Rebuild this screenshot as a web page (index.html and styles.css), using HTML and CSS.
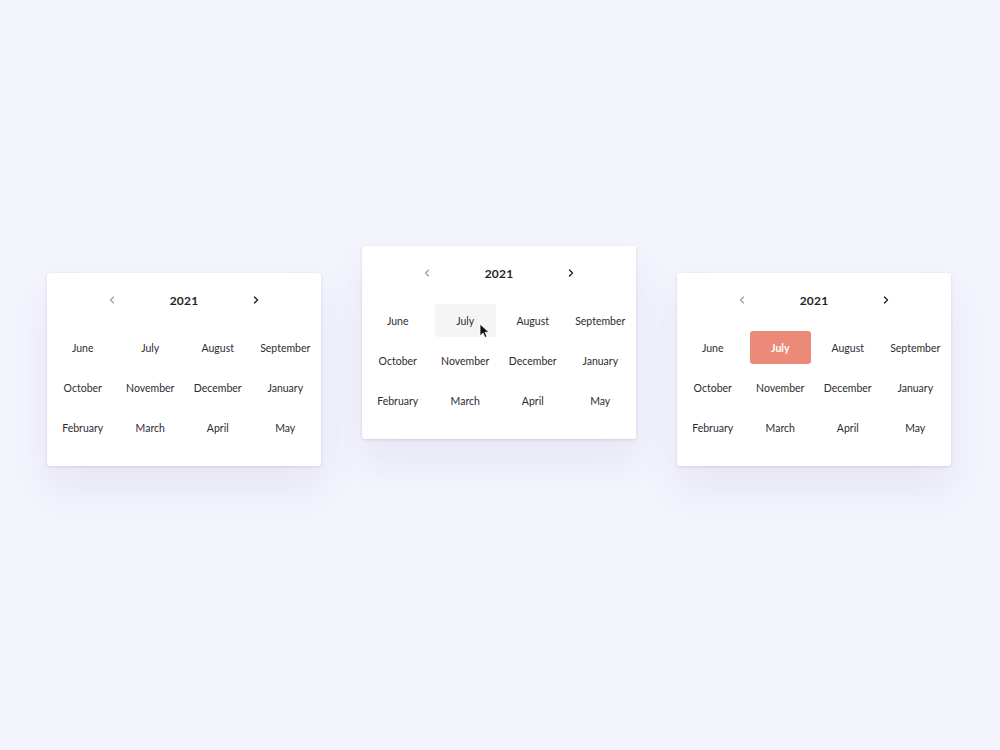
FILE: index.html
```html
<!DOCTYPE html>
<html lang="en">
<head>
  <meta charset="UTF-8">
  <meta name="viewport" content="width=device-width, initial-scale=1.0">
  <title>Month Picker</title>
  <link rel="stylesheet" href="styles.css">
</head>
<body>
  <div class="pickers">

    <!-- default state -->
    <div class="picker">
      <div class="picker-head">
        <button class="nav nav-prev"><svg width="10" height="10" viewBox="0 0 10 10"><path d="M6.5 2 L3.5 5 L6.5 8" /></svg></button>
        <div class="year">2021</div>
        <button class="nav"><svg width="10" height="10" viewBox="0 0 10 10"><path d="M3.5 2 L6.5 5 L3.5 8" /></svg></button>
      </div>
      <div class="months">
        <div class="month">June</div>
        <div class="month">July</div>
        <div class="month">August</div>
        <div class="month">September</div>
        <div class="month">October</div>
        <div class="month">November</div>
        <div class="month">December</div>
        <div class="month">January</div>
        <div class="month">February</div>
        <div class="month">March</div>
        <div class="month">April</div>
        <div class="month">May</div>
      </div>
    </div>

    <!-- hover state -->
    <div class="picker raised">
      <div class="picker-head">
        <button class="nav nav-prev"><svg width="10" height="10" viewBox="0 0 10 10"><path d="M6.5 2 L3.5 5 L6.5 8" /></svg></button>
        <div class="year">2021</div>
        <button class="nav"><svg width="10" height="10" viewBox="0 0 10 10"><path d="M3.5 2 L6.5 5 L3.5 8" /></svg></button>
      </div>
      <div class="months">
        <div class="month">June</div>
        <div class="month hover">July
          <svg class="cursor" width="11" height="16" viewBox="0 0 11 16"><path d="M1 1 L1 13 L4 10 L6 14.5 L8 13.6 L6 9.3 L10 9.3 Z" /></svg>
        </div>
        <div class="month">August</div>
        <div class="month">September</div>
        <div class="month">October</div>
        <div class="month">November</div>
        <div class="month">December</div>
        <div class="month">January</div>
        <div class="month">February</div>
        <div class="month">March</div>
        <div class="month">April</div>
        <div class="month">May</div>
      </div>
    </div>

    <!-- selected state -->
    <div class="picker">
      <div class="picker-head">
        <button class="nav nav-prev"><svg width="10" height="10" viewBox="0 0 10 10"><path d="M6.5 2 L3.5 5 L6.5 8" /></svg></button>
        <div class="year">2021</div>
        <button class="nav"><svg width="10" height="10" viewBox="0 0 10 10"><path d="M3.5 2 L6.5 5 L3.5 8" /></svg></button>
      </div>
      <div class="months">
        <div class="month">June</div>
        <div class="month active">July</div>
        <div class="month">August</div>
        <div class="month">September</div>
        <div class="month">October</div>
        <div class="month">November</div>
        <div class="month">December</div>
        <div class="month">January</div>
        <div class="month">February</div>
        <div class="month">March</div>
        <div class="month">April</div>
        <div class="month">May</div>
      </div>
    </div>

  </div>
</body>
</html>
```

FILE: styles.css
```css
body {
  margin: 0;
  height: 100vh;
  box-sizing: border-box;
  padding: 0 2px 11px 0;
  background-color: #f4f4fd;
  font-family: 'Lato', sans-serif;
  display: flex;
  justify-content: center;
  align-items: center;
}
.pickers {
  display: flex;
  align-items: center;
  gap: 41px;
}
.picker {
  width: 274px;
  height: 193px;
  box-sizing: border-box;
  padding: 18px 5px 22px;
  background: #fff;
  border-radius: 3px;
  box-shadow: 0 1px 3px rgba(40, 40, 90, 0.14), 0 22px 40px rgba(90, 90, 170, 0.09);
}
.picker.raised {
  margin-bottom: 54px;
}
.picker-head {
  width: 155px;
  height: 18px;
  margin: 0 auto 22px;
  display: flex;
  justify-content: space-between;
  align-items: center;
}
.nav {
  width: 10px;
  height: 10px;
  padding: 0;
  border: none;
  background: none;
  display: flex;
  cursor: pointer;
}
.nav path {
  fill: none;
  stroke: #222;
  stroke-width: 1.4;
  stroke-linecap: round;
  stroke-linejoin: round;
}
.nav-prev path {
  stroke: #999;
  stroke-width: 1.1;
}
.year {
  font-size: 12px;
  font-weight: 700;
  color: #1f1f24;
  letter-spacing: 0.2px;
}
.months {
  display: grid;
  grid-template-columns: repeat(4, 1fr);
  column-gap: 6px;
  row-gap: 7px;
}
.month {
  position: relative;
  height: 33px;
  border-radius: 3px;
  display: flex;
  justify-content: center;
  align-items: center;
  font-size: 10.5px;
  color: #2c2c30;
  cursor: pointer;
}
.month.hover {
  background: #f5f5f5;
}
.month.active {
  background: #ec8a7a;
  color: #fff;
  font-weight: 700;
}
.cursor {
  position: absolute;
  left: 44px;
  top: 19px;
}
.cursor path {
  fill: #111;
  stroke: #fff;
  stroke-width: 0.8;
}
```
